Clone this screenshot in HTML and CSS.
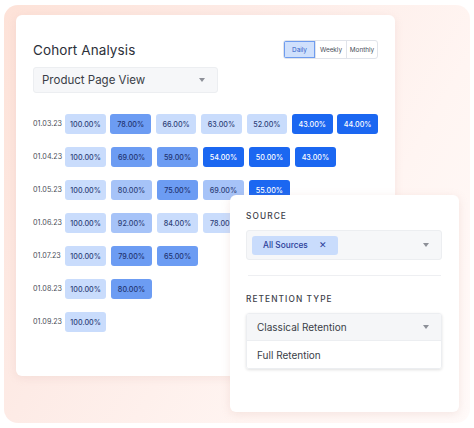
FILE: index.html
```html
<!DOCTYPE html>
<html>
<head>
<meta charset="utf-8">
<link rel="stylesheet" href="styles.css">
</head>
<body>
<div class="stage">
  <div class="card">
    <div class="header">
      <div class="title">Cohort Analysis</div>
      <div class="toggle">
        <span class="tg active">Daily</span>
        <span class="tg">Weekly</span>
        <span class="tg">Monthly</span>
      </div>
    </div>
    <div class="dropdown">
      <span>Product Page View</span>
      <span class="caret"></span>
    </div>
    <div class="grid">
      <div class="row"><span class="date">01.03.23</span>
        <span class="c l">100.00%</span><span class="c m">78.00%</span><span class="c l">66.00%</span><span class="c l">63.00%</span><span class="c l">52.00%</span><span class="c d">43.00%</span><span class="c d">44.00%</span></div>
      <div class="row"><span class="date">01.04.23</span>
        <span class="c l">100.00%</span><span class="c m">69.00%</span><span class="c m">59.00%</span><span class="c d">54.00%</span><span class="c d">50.00%</span><span class="c d">43.00%</span></div>
      <div class="row"><span class="date">01.05.23</span>
        <span class="c l">100.00%</span><span class="c lm">80.00%</span><span class="c m">75.00%</span><span class="c lm">69.00%</span><span class="c d">55.00%</span></div>
      <div class="row"><span class="date">01.06.23</span>
        <span class="c l">100.00%</span><span class="c lm">92.00%</span><span class="c l">84.00%</span><span class="c l">78.00%</span></div>
      <div class="row"><span class="date">01.07.23</span>
        <span class="c l">100.00%</span><span class="c m">79.00%</span><span class="c m">65.00%</span></div>
      <div class="row"><span class="date">01.08.23</span>
        <span class="c l">100.00%</span><span class="c m">80.00%</span></div>
      <div class="row"><span class="date">01.09.23</span>
        <span class="c l">100.00%</span></div>
    </div>
  </div>

  <div class="panel">
    <div class="label">SOURCE</div>
    <div class="select">
      <span class="chip">All Sources <span class="x">✕</span></span>
      <span class="caret"></span>
    </div>
    <div class="divider"></div>
    <div class="label">RETENTION TYPE</div>
    <div class="options">
      <div class="opt first"><span>Classical Retention</span><span class="caret"></span></div>
      <div class="opt">Full Retention</div>
    </div>
  </div>
</div>
</body>
</html>
```

FILE: styles.css
```css
* { box-sizing: border-box; }
html, body { margin: 0; padding: 0; background: #ffffff; }
body {
  width: 474px;
  height: 428px;
  overflow: hidden;
  font-family: "Inter", "Noto Sans", sans-serif;
  color: #2e3340;
}
.stage {
  position: relative;
  margin: 5px 4px 0 4px;
  width: 466px;
  height: 418px;
  padding: 10px 12px;
  border-radius: 14px;
  background: linear-gradient(120deg, #fde2d8 0%, #fdebe6 35%, #fff5f2 70%, #fffaf9 100%);
}
.card {
  width: 379px;
  height: 361px;
  background: #ffffff;
  border-radius: 6px;
  box-shadow: 0 2px 8px rgba(200, 150, 140, 0.16);
  padding: 25px 17px 0 17px;
}
.header {
  display: flex;
  justify-content: space-between;
  align-items: center;
  height: 19px;
}
.title {
  font-size: 13.5px;
  font-weight: 400;
  color: #2c3039;
  letter-spacing: 0.1px;
  margin-top: 1px;
}
.toggle {
  display: flex;
  border: 1px solid #e1e4ea;
  border-radius: 3px;
  height: 19px;
  overflow: hidden;
}
.tg {
  width: 31px;
  display: flex;
  align-items: center;
  justify-content: center;
  font-size: 6.4px;
  color: #4a4f5a;
  border-left: 1px solid #e1e4ea;
}
.tg:first-child { border-left: none; }
.tg.active {
  background: #cfe0fc;
  color: #3060c8;
  box-shadow: inset 0 0 0 1px #6e9cef;
}
.dropdown {
  margin-top: 8px;
  width: 185px;
  height: 26px;
  background: #f6f7f9;
  border: 1px solid #eceef1;
  border-radius: 3px;
  display: flex;
  align-items: center;
  justify-content: space-between;
  padding: 0 12px 0 8px;
  font-size: 11.5px;
  color: #3a3e47;
}
.caret {
  width: 0;
  height: 0;
  border-left: 3.5px solid transparent;
  border-right: 3.5px solid transparent;
  border-top: 4px solid #8d9098;
}
.grid {
  margin-top: 21px;
  display: flex;
  flex-direction: column;
  gap: 13px;
}
.row {
  display: flex;
  align-items: center;
  gap: 4.67px;
  height: 20px;
}
.date {
  width: 27.3px;
  font-size: 7.2px;
  color: #4a4e58;
  margin-top: -2px;
}
.c {
  width: 41.3px;
  height: 20px;
  border-radius: 3px;
  display: flex;
  align-items: center;
  justify-content: center;
  font-size: 7.2px;
  font-weight: 500;
  color: #2d3f78;
}
.c.l { background: #c9dcfc; }
.c.lm { background: #a6c3f8; }
.c.m { background: #6c9cf3; color: #1f3370; }
.c.d { background: #1b67f1; color: #ffffff; }

.panel {
  position: absolute;
  left: 226px;
  top: 190px;
  width: 229px;
  height: 217px;
  background: #ffffff;
  border-radius: 6px;
  box-shadow: 0 2px 10px rgba(200, 150, 140, 0.2);
  padding: 16px 16px 0 16px;
}
.label {
  font-size: 8.3px;
  letter-spacing: 1.1px;
  font-weight: 500;
  color: #3d414a;
  height: 10px;
  line-height: 10px;
}
.select {
  margin-top: 9px;
  width: 196px;
  height: 30px;
  background: #f6f7f9;
  border: 1px solid #eceef1;
  border-radius: 3px;
  display: flex;
  align-items: center;
  justify-content: space-between;
  padding: 0 12px 0 5px;
}
.chip {
  width: 86px;
  height: 19px;
  background: #c9dcfc;
  border-radius: 3px;
  display: flex;
  align-items: center;
  padding-left: 11px;
  font-size: 8.3px;
  font-weight: 500;
  color: #2b3e9a;
}
.chip .x {
  margin-left: 11px;
  font-size: 8.5px;
  font-weight: 400;
}
.divider {
  margin: 15px 2px 0 2px;
  height: 1px;
  background: #eeeff2;
}
.panel .divider + .label { margin-top: 18px; }
.options {
  margin-top: 9px;
  width: 196px;
  border-radius: 3px;
  box-shadow: 0 1px 3px rgba(0, 0, 0, 0.12);
  border: 1px solid #eceef1;
  overflow: hidden;
}
.opt {
  height: 27px;
  display: flex;
  align-items: center;
  padding: 0 12px 0 10px;
  font-size: 10px;
  color: #3a3e47;
  background: #ffffff;
}
.opt.first {
  justify-content: space-between;
  background: #f5f6f8;
  border-bottom: 1px solid #eceef1;
}
```
